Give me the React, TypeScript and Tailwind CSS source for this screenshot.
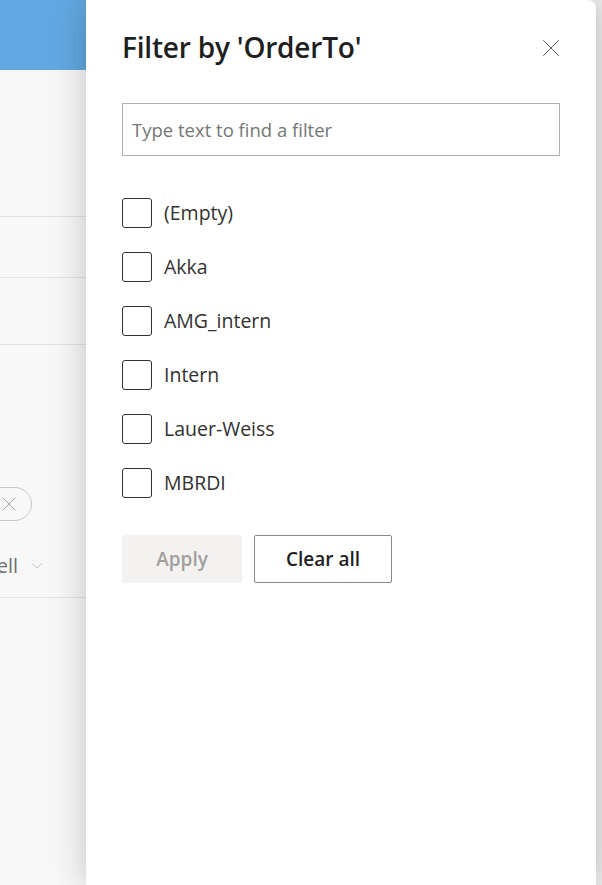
import { X, ChevronDown } from "lucide-react";

const OPTIONS = ["(Empty)", "Akka", "AMG_intern", "Intern", "Lauer-Weiss", "MBRDI"];

const font = "font-['Open_Sans','Noto_Sans',sans-serif]";

function Backdrop() {
  return (
    <div className="w-[86px] shrink-0 overflow-hidden bg-[#f8f8f8] flex flex-col">
      <div className="h-[70px] shrink-0 bg-[#62a8e2]" />
      <div className="h-[147px] shrink-0 border-b border-[#e3e3e3]" />
      <div className="h-[61px] shrink-0 border-b border-[#e3e3e3]" />
      <div className="h-[67px] shrink-0 border-b border-[#e3e3e3]" />
      <div className="h-[176px] shrink-0 flex items-end justify-end pr-[54px]">
        <div className="h-[34px] w-[120px] shrink-0 rounded-full border border-[#c8c8c8] flex items-center justify-end pr-[10px]">
          <X size={24} strokeWidth={0.9} className="text-[#9a9a9a]" />
        </div>
      </div>
      <div className="h-[77px] shrink-0 border-b border-[#e3e3e3] flex items-start justify-end pt-[32px] pr-[40px] gap-[10px]">
        <span className={`${font} text-[20px] leading-[26px] text-[#6e6e6e] whitespace-nowrap shrink-0`}>Modell</span>
        <ChevronDown size={18} strokeWidth={1.1} className="text-[#b0b0b0] shrink-0 mt-[4px]" />
      </div>
    </div>
  );
}

export default function App() {
  return (
    <div className={`${font} w-[602px] h-[885px] flex overflow-hidden bg-[#ededed]`}>
      <Backdrop />
      <aside className="w-[510px] shrink-0 bg-white rounded-tr-[8px] shadow-[0_0_36px_rgba(0,0,0,0.22)] flex flex-col px-[36px] pt-[26px]">
        <div className="flex items-center justify-between h-[42px]">
          <h2 className="text-[28px] font-semibold text-[#201f1e] tracking-[-0.2px]">Filter by 'OrderTo'</h2>
          <X size={30} strokeWidth={0.8} className="text-[#605e5c] mt-[2px] -mr-[6px]" />
        </div>

        <input
          placeholder="Type text to find a filter"
          className="mt-[35px] h-[53px] w-full border border-[#b0b0b0] px-[9px] text-[18.5px] text-[#323130] placeholder:text-[#767676] outline-none"
        />

        <div className="mt-[42px] flex flex-col gap-[24px]">
          {OPTIONS.map((o) => (
            <label key={o} className="flex items-center gap-[12px] h-[30px]">
              <span className="w-[30px] h-[30px] rounded-[3px] border border-[#323130] shrink-0" />
              <span className="text-[19.5px] text-[#323130]">{o}</span>
            </label>
          ))}
        </div>

        <div className="mt-[37px] flex gap-[12px]">
          <button className="w-[120px] h-[48px] rounded-[2px] bg-[#f3f2f1] text-[19px] font-semibold text-[#a19f9d]">
            Apply
          </button>
          <button className="w-[138px] h-[48px] rounded-[2px] border border-[#8a8886] bg-white text-[19px] font-semibold text-[#201f1e]">
            Clear all
          </button>
        </div>
      </aside>
      <div className="flex-1" />
    </div>
  );
}
